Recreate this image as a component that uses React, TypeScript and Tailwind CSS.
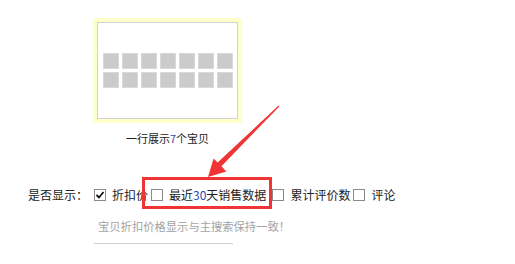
import React from 'react'

const font = { fontFamily: '"Noto Sans CJK SC", "Noto Sans", sans-serif' }

const Box: React.FC<{ checked?: boolean }> = ({ checked }) => (
    <span className="w-[12px] h-[12px] border border-[#8a8a8a] bg-white flex items-center justify-center shrink-0">
        {checked && (
            <svg width="10" height="10" viewBox="0 0 10 10">
                <path d="M1.5 5 L4 7.5 L8.5 2" fill="none" stroke="#111" strokeWidth="1.8" />
            </svg>
        )}
    </span>
)

const Option: React.FC<{ checked?: boolean; children: React.ReactNode }> = ({ checked, children }) => (
    <label className="flex items-center">
        <Box checked={checked} />
        <span className="ml-[6px] mr-[3px] whitespace-nowrap">{children}</span>
    </label>
)

export default function App() {
    const cells = Array.from({ length: 14 })
    return (
        <div className="relative w-[515px] h-[264px] bg-white overflow-hidden text-[#222]" style={font}>
            <div className="pt-[18px] pl-[93px] w-[242px]">
                <div className="w-[149px] h-[105px] border-4 border-[#ffffcc]">
                    <div className="w-full h-full border border-[#d2d2d2] flex items-center justify-center">
                        <div className="grid grid-cols-7 gap-[3px]">
                            {cells.map((_, i) => (
                                <span key={i} className="w-[16px] h-[16px] bg-[#cbcbcb] border border-[#d9d9d9]" />
                            ))}
                        </div>
                    </div>
                </div>
                <p className="w-[149px] mt-[7px] text-center text-[11px] leading-[16px]">
                    一行展示<span className="text-[#2b46b8]">7</span>个宝贝
                </p>
            </div>

            <div className="mt-[41px] flex items-center text-[12px] leading-[16px]">
                <span className="ml-[28px] w-[66px] whitespace-nowrap">是否显示：</span>
                <Option checked>折扣价</Option>
                <Option>
                    最近<span className="text-[#2b46b8]">30</span>天销售数据
                </Option>
                <span className="w-[3px]" />
                <Option>累计评价数</Option>
                <Option>评论</Option>
            </div>

            <div className="ml-[94px] w-[139px]">
                <p className="mt-[15px] pl-[4px] text-[11.3px] leading-[16px] text-[#a3a3a3] whitespace-nowrap">
                    宝贝折扣价格显示与主搜索保持一致！
                </p>
                <div className="mt-[9px] h-px bg-[#d0d0d0]" />
            </div>

            {/* annotation */}
            <div className="absolute left-[142px] top-[177px] w-[130px] h-[32px] border-[3px] border-[#f03434]" />
            <svg className="absolute left-0 top-0" width="515" height="264" viewBox="0 0 515 264">
                <polygon
                    fill="#f03434"
                    points="208,177 213.6,158.6 217.6,162.4 278.6,105.6 279.4,106.4 221.4,166.2 226.4,171.4"
                />
            </svg>
        </div>
    )
}
